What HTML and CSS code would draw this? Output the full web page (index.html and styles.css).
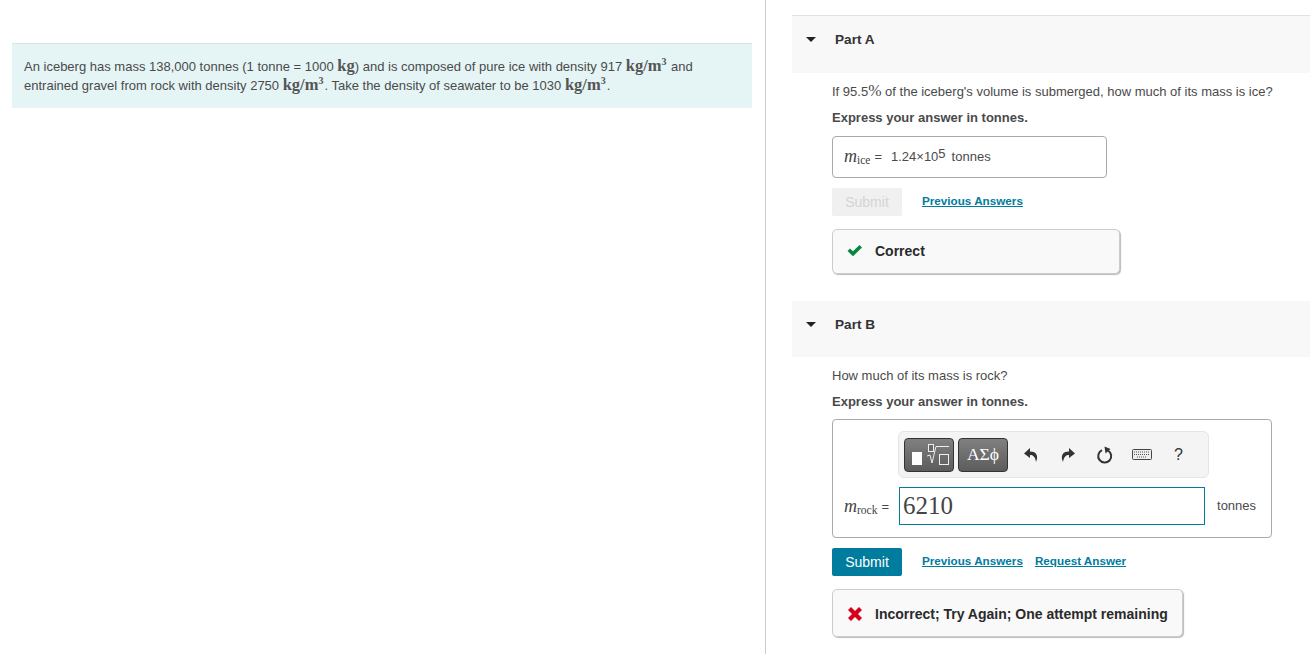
FILE: index.html
```html
<!DOCTYPE html>
<html lang="en">
<head>
  <meta charset="UTF-8"/>
  <meta name="viewport" content="width=device-width,initial-scale=1"/>
  <title>Iceberg problem</title>
  <link rel="stylesheet" href="styles.css">
</head>
<body>
  <div class="layout">
    <div class="left">
      <div class="intro">
        An iceberg has mass 138,000 tonnes (1 tonne = 1000 <span class="unit">kg</span>) and is composed of pure ice with density 917 <span class="unit">kg/m<sup>3</sup></span> and<br>
        entrained gravel from rock with density 2750 <span class="unit">kg/m<sup>3</sup></span>. Take the density of seawater to be 1030 <span class="unit">kg/m<sup>3</sup></span>.
      </div>
    </div>

    <div class="right">
      <!-- part a -->
      <div class="part-head first">
        <span class="caret"></span>
        <span class="part-title">Part A</span>
      </div>
      <div class="part-body">
        <p class="question">If 95.5<span class="pct">%</span> of the iceberg's volume is submerged, how much of its mass is ice?</p>
        <p class="express">Express your answer in tonnes.</p>
        <div class="answer-done">
          <span class="var">m<sub>ice</sub></span>
          <span class="eq">=</span>
          <span class="val">1.24×10<sup>5</sup></span>
          <span class="val">tonnes</span>
        </div>
        <div class="actions">
          <button class="btn off" type="button">Submit</button>
          <a class="link" href="#">Previous Answers</a>
        </div>
        <div class="feedback ok">
          <svg class="fb-icon" width="16" height="16" viewBox="0 0 16 16"><path d="M0.500 8 L3 5.500 L6 8.300 L12.500 2 L15 4.500 L6 13.300 Z" fill="#07873f"/></svg>
          <span>Correct</span>
        </div>
      </div>

      <!-- part b -->
      <div class="part-head second">
        <span class="caret"></span>
        <span class="part-title">Part B</span>
      </div>
      <div class="part-body">
        <p class="question rock">How much of its mass is rock?</p>
        <p class="express">Express your answer in tonnes.</p>
        <div class="answer-box">
          <div class="toolbar">
            <span class="tool-btn templates">
              <svg width="48" height="32" viewBox="0 0 48 32">
                <rect x="7" y="13" width="10" height="13" fill="#fff"/>
                <path d="M22 17 L25 16 L27 24 L31 7.500 L44 7.500" fill="none" stroke="#eee" stroke-width="1"/>
                <rect x="23.500" y="5.500" width="5" height="7" fill="#6a6a6a" stroke="#eee" stroke-width="1"/>
                <rect x="34.500" y="15.500" width="9" height="10" fill="none" stroke="#eee" stroke-width="1"/>
              </svg>
            </span>
            <span class="tool-btn greek">ΑΣϕ</span>
            <span class="tool">
              <svg width="16" height="16" viewBox="0 0 16 16"><path d="M7 1 L1 6.500 L7 11 V8 C10 8 12 9.500 13 15 C15.500 9.500 14 4.500 7 4.500 Z" fill="#333"/></svg>
            </span>
            <span class="tool">
              <svg width="16" height="16" viewBox="0 0 16 16"><path d="M9 1 L15 6.500 L9 11 V8 C6 8 4 9.500 3 15 C0.500 9.500 2 4.500 9 4.500 Z" fill="#333"/></svg>
            </span>
            <span class="tool">
              <svg width="18" height="18" viewBox="0 0 18 18"><path d="M12 4.500 A6.500 6.500 0 1 1 6 4.200" fill="none" stroke="#333" stroke-width="2"/><path d="M8.500 0.500 L14.500 3 L9.500 7.500 Z" fill="#333"/></svg>
            </span>
            <span class="tool">
              <svg width="20" height="11" viewBox="0 0 20 11"><rect x="0.500" y="0.500" width="19" height="10" rx="1" fill="#eee" stroke="#444"/><path d="M2 3 H18 M2 5.500 H18 M5 8 H15" stroke="#555" stroke-width="1.200" stroke-dasharray="1 1"/></svg>
            </span>
            <span class="tool help">?</span>
          </div>
          <div class="input-row">
            <span class="var">m<sub>rock</sub></span>
            <span class="eq">=</span>
            <input class="math-input" type="text" value="6210">
            <span class="val">tonnes</span>
          </div>
        </div>
        <div class="actions">
          <button class="btn" type="button">Submit</button>
          <a class="link" href="#">Previous Answers</a>
          <a class="link" href="#">Request Answer</a>
        </div>
        <div class="feedback bad">
          <svg class="fb-icon" width="16" height="16" viewBox="0 0 16 16"><path d="M1 4 L4 1 L8 5 L12 1 L15 4 L11 8 L15 12 L12 15 L8 11 L4 15 L1 12 L5 8 Z" fill="#d5001c"/></svg>
          <span>Incorrect; Try Again; One attempt remaining</span>
        </div>
      </div>
    </div>
  </div>
</body>
</html>
```

FILE: styles.css
```css
:root {
  --text: #4a4a4a;
  --dark: #333;
  --head: #f8f8f8;
  --accent: #007c9e;
}
* { box-sizing: border-box; margin: 0; padding: 0 }
html, body { height: 100%; overflow: hidden }
body {
  font-family: "Liberation Sans", Arial, sans-serif;
  font-size: 13px;
  color: var(--text);
  background: #fff;
}
.layout { display: flex; height: 654px }
.left {
  width: 766px;
  padding: 43px 13px 0 12px;
  border-right: 1px solid #ccc;
}
.right { flex: 1; padding: 15px 0 0 26px }

.intro {
  height: 65px;
  padding: 13px 12px 0;
  background: #e5f5f6;
  border-top: 1px solid #d9e4e6;
  line-height: 19px;
}
.unit {
  font-family: "Liberation Serif", serif;
  font-weight: bold;
  font-size: 16.500px;
  line-height: 0;
  color: #555;
}
.unit sup { font-size: 10px; margin-right: 1px }
sup { line-height: 0; vertical-align: 6px }

.part-head {
  display: flex;
  align-items: flex-start;
  background: var(--head);
  padding: 16px 0 0 14px;
}
.part-head.first { height: 58px; border-top: 1px solid #e2e2e2 }
.part-head.second { height: 56px; margin-top: 27px }
.caret {
  width: 0;
  height: 0;
  margin-top: 5px;
  border-left: 5px solid transparent;
  border-right: 5px solid transparent;
  border-top: 5px solid #222;
}
.part-title {
  margin-left: 19px;
  font-size: 13.600px;
  font-weight: bold;
  color: var(--dark);
}

.part-body { padding-left: 40px }
.question { padding-top: 11px; line-height: 16px }
.pct { font-family: "Liberation Serif", serif; font-size: 16px; line-height: 0 }
.express {
  margin-top: 10px;
  line-height: 16px;
  font-weight: bold;
}

.answer-done {
  display: flex;
  align-items: center;
  width: 275px;
  height: 42px;
  margin-top: 10px;
  padding-left: 11px;
  padding-bottom: 1px;
  border: 1px solid #aaa;
  border-radius: 4px;
}
.var {
  font-family: "Liberation Serif", serif;
  font-style: italic;
  font-size: 18px;
  color: #444;
}
.var sub { font-size: 11.500px; font-style: normal; line-height: 0; vertical-align: -2px }
.eq { margin: 0 9px 0 4px }
.val { margin-right: 6px }
.val sup { font-size: 13px; vertical-align: 3px }

.actions {
  display: flex;
  align-items: flex-start;
  gap: 12px;
  margin-top: 10px;
  height: 28px;
}
.btn {
  width: 70px;
  height: 28px;
  margin-right: 8px;
  border: none;
  border-radius: 2px;
  background: var(--accent);
  color: #fff;
  font-family: inherit;
  font-size: 14px;
}
.btn.off { background: #f0f0f0; color: #d4d4d4 }
.link {
  margin-top: 5px;
  color: var(--accent);
  font-weight: bold;
  line-height: 15px;
  font-size: 11.700px;
}

.feedback {
  display: flex;
  align-items: center;
  margin-top: 13px;
  padding-left: 14px;
  background: #f9f9f9;
  border: 1px solid #ccc;
  border-radius: 5px;
  box-shadow: 1px 1px 1px #bbb;
  font-size: 14px;
  font-weight: bold;
  color: #2a2a2a;
}
.feedback.ok { width: 288px; height: 45px; padding-bottom: 1px }
.feedback.bad { width: 351px; height: 48px; padding-top: 2px; white-space: nowrap }
.fb-icon { margin-right: 12px }

.answer-box {
  width: 440px;
  height: 119px;
  margin-top: 9px;
  padding-top: 11px;
  border: 1px solid #aaa;
  border-radius: 4px;
}
.toolbar {
  display: flex;
  align-items: center;
  width: 311px;
  height: 47px;
  margin-left: 65px;
  padding-left: 5px;
  background: #f4f4f4;
  border: 1px solid #e4e4e4;
  border-radius: 6px;
}
.tool-btn {
  display: flex;
  align-items: center;
  justify-content: center;
  height: 34px;
  margin-right: 4px;
  border: 1px solid #333;
  border-radius: 4px;
  background: linear-gradient(#808080, #5c5c5c);
  color: #fff;
}
.templates { width: 50px }
.greek {
  width: 50px;
  font-family: "Liberation Serif", serif;
  font-size: 17.500px;
}
.tool {
  display: flex;
  align-items: center;
  justify-content: center;
  width: 37px;
}
.help { font-size: 16px; color: var(--dark) }

.input-row {
  display: flex;
  align-items: center;
  margin-top: 9px;
  padding-left: 11px;
}
.input-row .eq { margin-right: 10px }
.math-input {
  width: 306px;
  height: 38px;
  padding-left: 3px;
  border: 1px solid var(--accent);
  font-family: "Liberation Serif", serif;
  font-size: 25px;
  color: #444;
  outline: none;
}
.input-row .val { margin: 0 0 0 12px; padding-bottom: 2px }
```
